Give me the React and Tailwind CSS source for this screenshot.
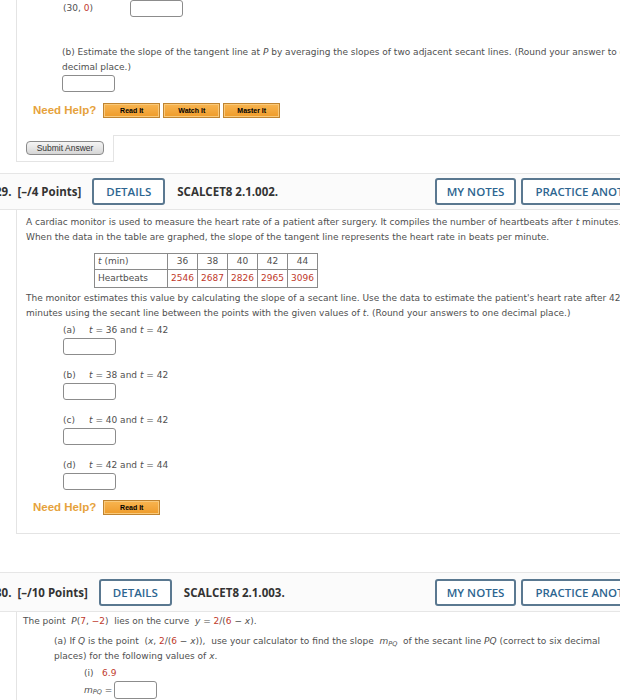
import React from "react";

const bodyFont = "font-['DejaVu_Sans',Verdana,sans-serif]";
const red = "text-[#c0392b]";

function AnswerBox({ className = "" }) {
  return (
    <div
      className={`w-[53px] h-[17px] rounded-[3px] border border-[#8c8c8c] bg-white ${className}`}
    />
  );
}

function HelpButton({ label }) {
  return (
    <div className="w-[57px] h-[15px] flex items-center justify-center border border-[#c08430] bg-gradient-to-b from-[#f8b550] to-[#ee9b28] shadow-[inset_0_0_0_1px_#f9c97a] font-['Liberation_Sans',Arial,sans-serif] text-[7px] font-bold text-black">
      {label}
    </div>
  );
}

function NeedHelp({ buttons }) {
  return (
    <div className="flex items-center gap-[3px] pl-[16px]">
      <span className="mr-[4px] font-['Liberation_Sans',Arial,sans-serif] text-[11.5px] font-bold text-[#e6a23c]">
        Need Help?
      </span>
      {buttons.map((b) => (
        <HelpButton key={b} label={b} />
      ))}
    </div>
  );
}

function OutlineButton({ children, className = "" }) {
  return (
    <div
      className={`h-[27px] flex items-center rounded-[3px] border-2 border-[#5a7890] bg-white text-[11.5px] font-semibold text-[#2d6590] whitespace-nowrap ${className}`}
    >
      {children}
    </div>
  );
}

function QuestionHeader({ num, pts, code, tall }) {
  return (
    <div
      className={`flex items-center pl-[1px] pr-[10px] border-y border-[#e6e6e6] bg-[#fbfbfb] font-['Open_Sans',sans-serif] ${
        tall ? "h-[40px]" : "h-[37px]"
      }`}
    >
      <div className="flex items-center gap-[6px] text-[11.5px] font-bold text-[#333] whitespace-nowrap">
        <span>{num}.</span>
        <span>[–/{pts} Points]</span>
      </div>
      <OutlineButton className="ml-[11px] px-[12px]">DETAILS</OutlineButton>
      <span className="ml-[12px] text-[11.5px] font-bold text-[#333] whitespace-nowrap">
        {code}
      </span>
      <div className="flex-1" />
      <OutlineButton className="px-[10px]">MY NOTES</OutlineButton>
      <OutlineButton className="ml-[5px] px-[12px]">PRACTICE ANOTHER</OutlineButton>
    </div>
  );
}

function T() {
  return <i>t</i>;
}

function PartRow({ letter, a, b }) {
  return (
    <div className="flex flex-col">
      <div className="flex items-center h-[15px] whitespace-nowrap">
        <span className="w-[26px]">({letter})</span>
        <span>
          <T /> = {a} and <T /> = {b}
        </span>
      </div>
      <AnswerBox />
    </div>
  );
}

const heartRows = [
  [36, 2546],
  [38, 2687],
  [40, 2826],
  [42, 2965],
  [44, 3096],
];

export default function App() {
  return (
    <div className="w-[620px] h-[700px] overflow-hidden bg-white">
      <div className={`-ml-[6px] w-[676px] text-[9px] leading-[15px] text-[#4f4f4f] ${bodyFont}`}>
        {/* tail of the previous question */}
        <div className="ml-[22px]">
          <div className="border-l border-[#e4e4e4] pl-[46px] pb-[17px]">
            <div className="flex items-center h-[17px] whitespace-nowrap">
              <span className="w-[67px]">
                (30, <span className={red}>0</span>)
              </span>
              <AnswerBox />
            </div>
            <div className="mt-[28px] -ml-[1px] whitespace-nowrap">
              <div>
                (b) Estimate the slope of the tangent line at <i>P</i> by averaging the slopes of two
                adjacent secant lines. (Round your answer to one
              </div>
              <div>decimal place.)</div>
            </div>
            <AnswerBox className="-ml-[1px]" />
            <div className="mt-[11px] -ml-[46px]">
              <NeedHelp buttons={["Read It", "Watch It", "Master It"]} />
            </div>
          </div>
          <div className="flex items-start">
            <div className="w-[98px] h-[27px] border-l border-r border-b border-[#e4e4e4] flex items-center pl-[9px]">
              <div className="w-[78px] h-[14px] flex items-center justify-center rounded-[4px] border border-[#8a8a8a] bg-gradient-to-b from-[#f5f5f5] to-[#d6d6d6] font-['Liberation_Sans',Arial,sans-serif] text-[8.5px] leading-none text-[#333]">
                Submit Answer
              </div>
            </div>
            <div className="flex-1 border-t border-[#e4e4e4]" />
          </div>
        </div>

        {/* question 29 */}
        <div className="mt-[11px]">
          <QuestionHeader num={29} pts={4} code="SCALCET8 2.1.002." />
        </div>
        <div className="ml-[22px] border-l border-b border-[#e4e4e4] pl-[9px] pt-[5px] pb-[18px]">
          <div className="whitespace-nowrap">
            <div>
              A cardiac monitor is used to measure the heart rate of a patient after surgery. It
              compiles the number of heartbeats after <T /> minutes. The
            </div>
            <div>
              When the data in the table are graphed, the slope of the tangent line represents the
              heart rate in beats per minute.
            </div>
          </div>
          <table className="mt-[8px] ml-[68px] border-collapse text-[9px] leading-none">
            <tbody>
              <tr className="h-[16px]">
                <td className="w-[73px] border border-[#8a8a8a] px-[3px]">
                  <T /> (min)
                </td>
                {heartRows.map(([t]) => (
                  <td key={t} className="w-[30px] border border-[#8a8a8a] text-center">
                    {t}
                  </td>
                ))}
              </tr>
              <tr className="h-[18px]">
                <td className="border border-[#8a8a8a] px-[3px]">Heartbeats</td>
                {heartRows.map(([t, h]) => (
                  <td key={t} className={`border border-[#8a8a8a] text-center ${red}`}>
                    {h}
                  </td>
                ))}
              </tr>
            </tbody>
          </table>
          <div className="mt-[3px] whitespace-nowrap">
            <div>
              The monitor estimates this value by calculating the slope of a secant line. Use the
              data to estimate the patient's heart rate after 42
            </div>
            <div>
              minutes using the secant line between the points with the given values of <T />.
              (Round your answers to one decimal place.)
            </div>
          </div>
          <div className="mt-[2px] pl-[37px] flex flex-col gap-[13px]">
            <PartRow letter="a" a={36} b={42} />
            <PartRow letter="b" a={38} b={42} />
            <PartRow letter="c" a={40} b={42} />
            <PartRow letter="d" a={42} b={44} />
          </div>
          <div className="mt-[10px] -ml-[9px]">
            <NeedHelp buttons={["Read It"]} />
          </div>
        </div>

        {/* question 30 */}
        <div className="mt-[38px]">
          <QuestionHeader num={30} pts={10} code="SCALCET8 2.1.003." tall />
        </div>
        <div className="ml-[22px] border-l border-[#e4e4e4] pl-[6px] pt-[2px] pb-[10px]">
          <div className="whitespace-nowrap">
            The point&nbsp; <i>P</i>(<span className={red}>7</span>, <span className={red}>−2</span>)&nbsp; lies on the curve&nbsp; <i>y</i> = <span className={red}>2</span>/(<span className={red}>6</span> − <i>x</i>).
          </div>
          <div className="mt-[5px] pl-[31px] whitespace-nowrap">
            <div>
              (a) If <i>Q</i> is the point&nbsp; (<i>x</i>, <span className={red}>2</span>/(<span className={red}>6</span> − <i>x</i>)),&nbsp; use your calculator to find the slope&nbsp; <i>m</i>
              <sub className="text-[6.5px] italic">PQ</sub>&nbsp; of the secant line <i>PQ</i> (correct to six decimal
            </div>
            <div>places) for the following values of <i>x</i>.</div>
            <div className="mt-[2px] pl-[30px]">
              <div>
                (i)&nbsp;&nbsp; <span className={red}>6.9</span>
              </div>
              <div className="flex items-center h-[18px]">
                <span className="w-[30px]">
                  <i>m</i>
                  <sub className="text-[6.5px] italic">PQ</sub> =
                </span>
                <div className="w-[43px] h-[18px] rounded-[3px] border border-[#8c8c8c] bg-white" />
              </div>
            </div>
          </div>
        </div>
      </div>
    </div>
  );
}
